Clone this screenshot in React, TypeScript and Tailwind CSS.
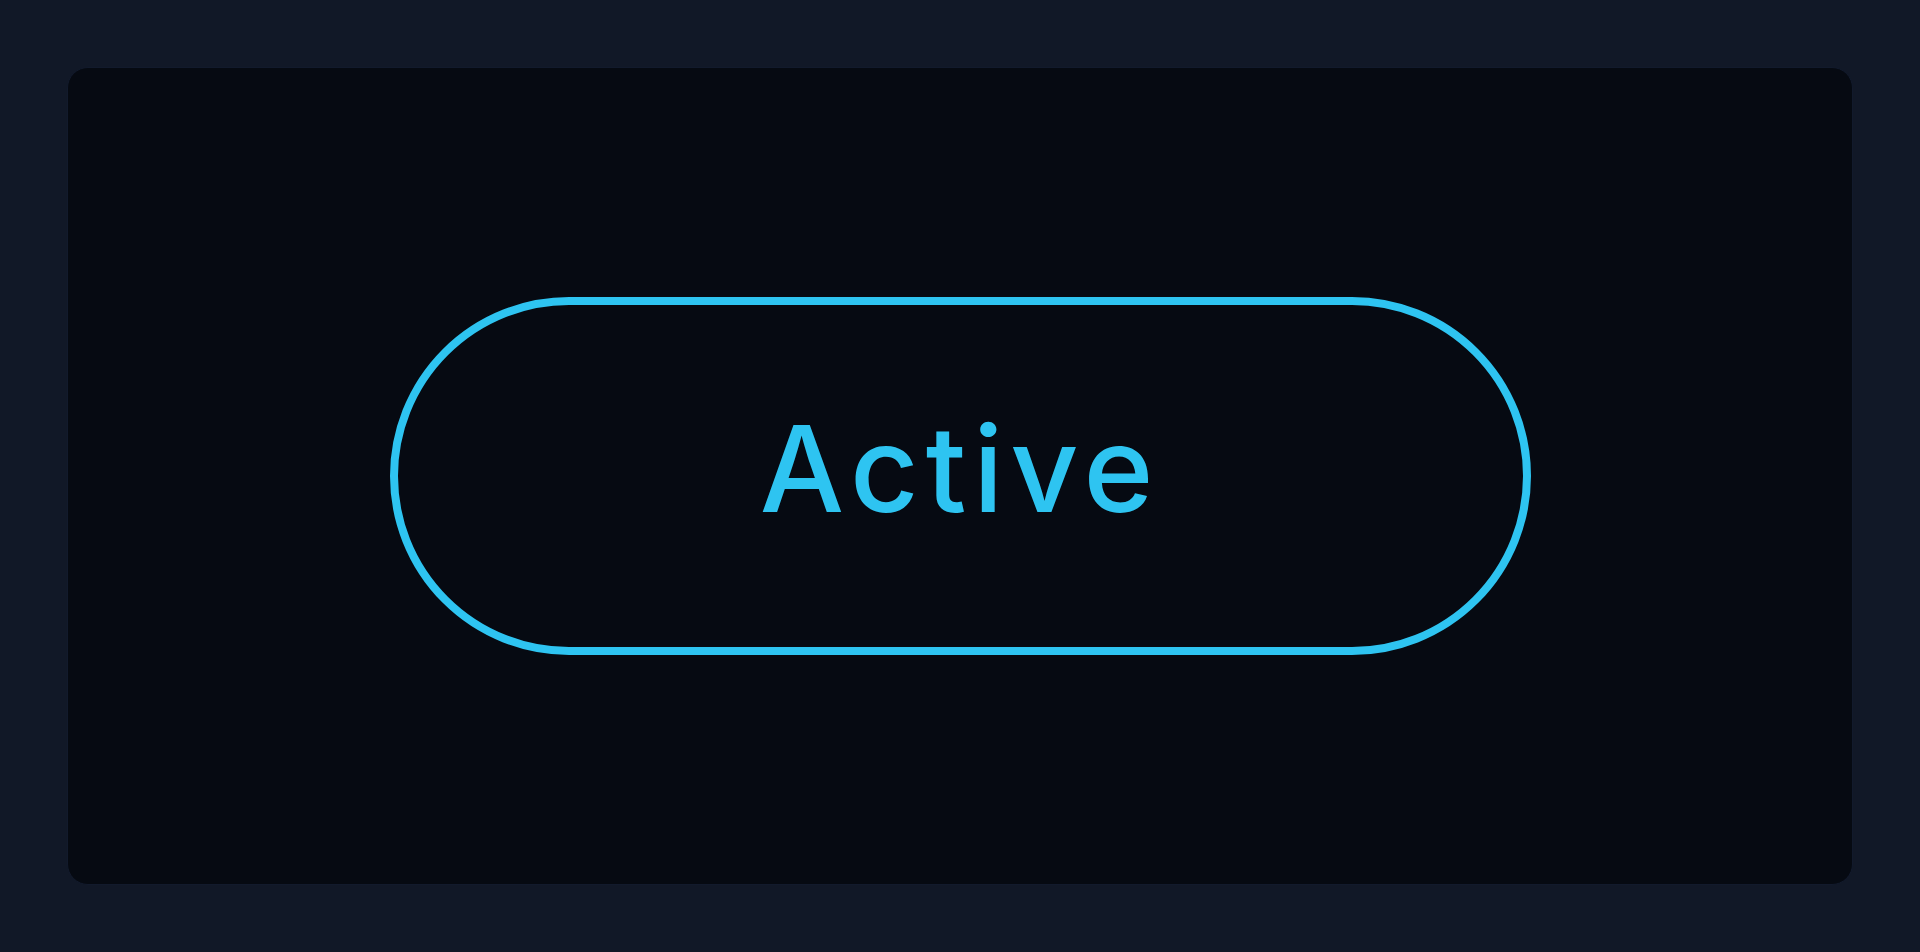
import React from "react";

export default function App() {
  return (
    <div className="h-screen w-full bg-[#111827] p-[67px] flex">
      <div className="flex-1 rounded-[21px] bg-[#060a12] border border-[#121a2c] flex items-center justify-center">
        <div className="w-[1141px] h-[358px] rounded-full border-[8px] border-[#2ec4f1] flex items-center justify-center pb-[14px]">
          <span
            className="text-[#2ec4f1] text-[119px] leading-none font-medium tracking-[7px]"
            style={{ fontFamily: "Inter, 'Liberation Sans', sans-serif" }}
          >
            Active
          </span>
        </div>
      </div>
    </div>
  );
}
